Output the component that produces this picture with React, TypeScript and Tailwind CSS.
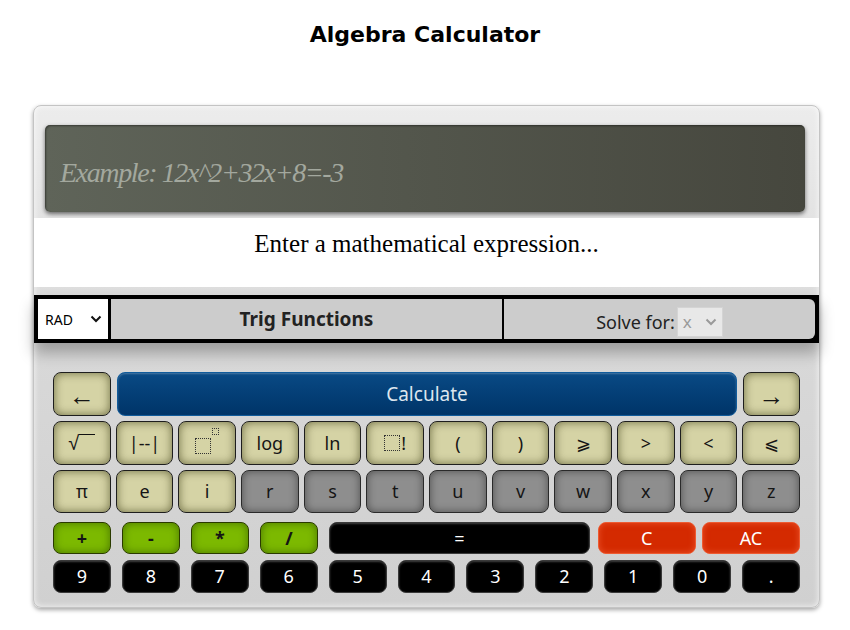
const beige =
  "bg-[#d5d3a5] border-[1.5px] border-[#1e1e1e] text-[#151515] shadow-[inset_0_0_10px_rgba(40,40,0,0.6)]";
const gray =
  "bg-[#8e8e8e] border-[1.5px] border-[#2a2a2a] text-[#151515] shadow-[inset_0_0_9px_rgba(0,0,0,0.45)]";
const green =
  "bg-[#7cb900] border-[1.5px] border-[#2a3a00] text-[#151515] shadow-[inset_0_0_8px_rgba(30,60,0,0.55)]";
const black = "bg-black border-[1.5px] border-[#3a3a3a] text-white shadow-[inset_0_1px_2px_rgba(255,255,255,0.25)]";
const red =
  "bg-[#d42a00] border border-[#ee5a30] text-white shadow-[inset_0_0_6px_rgba(255,120,80,0.5)]";

const fnRow = ["√‾", "|--|", "sq", "log", "ln", "fact", "(", ")", "⩾", ">", "<", "⩽"];
const letterRow = ["π", "e", "i", "r", "s", "t", "u", "v", "w", "x", "y", "z"];
const digits = ["9", "8", "7", "6", "5", "4", "3", "2", "1", "0", "."];

const Key = ({ cls, children, extra = "" }: { cls: string; children: React.ReactNode; extra?: string }) => (
  <div className={`flex items-center justify-center rounded-[8px] text-[18px] ${cls} ${extra}`}>{children}</div>
);

const Chevron = ({ color }: { color: string }) => (
  <svg width="12" height="8" viewBox="0 0 12 8" fill="none">
    <path d="M1.5 1.5 L6 6 L10.5 1.5" stroke={color} strokeWidth="2" />
  </svg>
);

const Boxy = ({ small }: { small?: boolean }) => (
  <span
    className={`inline-block border border-dotted border-[#333] ${small ? "w-[7px] h-[7px]" : "w-[16px] h-[16px]"}`}
  />
);

const fnLabel = (k: string) => {
  if (k === "sq")
    return (
      <span className="flex items-start gap-[1px] pt-[2px]">
        <span className="mt-[6px]"><Boxy /></span>
        <Boxy small />
      </span>
    );
  if (k === "fact")
    return (
      <span className="flex items-center gap-[1px]">
        <Boxy />
        <span>!</span>
      </span>
    );
  if (k === "√‾")
    return (
      <span className="flex items-start">
        <span className="text-[20px] leading-none">√</span>
        <span className="mt-[1px] w-[16px] border-t border-[#111]" />
      </span>
    );
  return k;
};

export default function App() {
  return (
    <div className="w-[850px] h-[630px] bg-white" style={{ fontFamily: "'Noto Sans', sans-serif" }}>
      <h1 className="pt-[20px] text-center text-[22px] font-bold text-black font-['DejaVu_Sans',sans-serif] leading-[30px]">
        Algebra Calculator
      </h1>

      <div className="ml-[33px] mt-[55px] w-[787px] rounded-[8px] border border-[#c4c4c4] bg-linear-to-b from-[#ececec] via-[#d8d8d8] to-[#d0d0d0] pt-[19px] pb-[14px] shadow-[0_2px_4px_rgba(0,0,0,0.35),inset_0_0_6px_rgba(255,255,255,0.8)]">
        {/* display */}
        <div className="ml-[11px] mr-[14px] h-[87px] rounded-[5px] bg-linear-to-r from-[#5f6459] to-[#46473e] shadow-[0_2px_4px_rgba(0,0,0,0.55),inset_1px_1px_2px_rgba(0,0,0,0.4)] flex items-center pl-[15px] pt-[8px]">
          <span className="italic text-[28px] tracking-[-1.4px] text-[#a3a89e] font-['Liberation_Serif',serif]">
            Example: 12x^2+32x+8=-3
          </span>
        </div>

        <div className="mt-[6px] h-[69px] bg-white text-center pt-[7px] text-[25px] text-black font-['Liberation_Serif',serif]">
          Enter a mathematical expression...
        </div>

        {/* control bar */}
        <div className="mt-[8px] h-[48px] border-4 border-black bg-black flex shadow-[0_10px_14px_rgba(0,0,0,0.28)]">
          <div className="w-[70px] bg-white flex items-center justify-between pl-[7px] pr-[6px] text-[14px] text-black">
            RAD
            <Chevron color="#111" />
          </div>
          <div className="ml-[3px] w-[391px] bg-[#cccccc] flex items-center justify-center text-[19px] font-bold text-[#222]">
            Trig Functions
          </div>
          <div className="ml-[2px] flex-1 bg-[#cccccc] rounded-r-[6px] flex items-end justify-center pb-[2px] gap-[2px] text-[18px] text-[#222]">
            <span className="pb-[1px]">Solve for:</span>
            <div className="w-[46px] h-[30px] bg-[#e8e8e8] border border-[#d4d4d4] flex items-center justify-between pl-[5px] pr-[5px] text-[#9a9a9a] text-[17px]">
              x
              <Chevron color="#9a9a9a" />
            </div>
          </div>
        </div>

        {/* keypad */}
        <div className="mt-[29px] pl-[19px] pr-[19px] flex flex-col">
          <div className="flex gap-[6px] h-[44px]">
            <Key cls={beige} extra="w-[58px] text-[#333] !text-[26px] pt-[2px]">←</Key>
            <div className="flex-1 rounded-[8px] bg-linear-to-b from-[#0a4a85] to-[#003468] border border-[#115c9c] flex items-center justify-center text-[19px] text-[#dde6ee] shadow-[inset_0_1px_2px_rgba(255,255,255,0.25)]">
              Calculate
            </div>
            <Key cls={beige} extra="w-[57px] text-[#333] !text-[26px] pt-[2px]">→</Key>
          </div>

          <div className="mt-[5px] grid grid-cols-12 gap-[5px] h-[44px]">
            {fnRow.map((k) => (
              <Key key={k} cls={beige}>{fnLabel(k)}</Key>
            ))}
          </div>

          <div className="mt-[5px] grid grid-cols-12 gap-[5px] h-[43px]">
            {letterRow.map((k, i) => (
              <Key key={k} cls={i < 3 ? beige : gray}>{k}</Key>
            ))}
          </div>

          <div className="mt-[9px] flex h-[32px]">
            <div className="flex gap-[11px]">
              {["+", "-", "*", "/"].map((k) => (
                <Key key={k} cls={green} extra="w-[58px] font-bold">{k}</Key>
              ))}
            </div>
            <Key cls={black} extra="ml-[11px] w-[263px]">=</Key>
            <Key cls={red} extra="ml-[8px] w-[99px]">C</Key>
            <Key cls={red} extra="ml-[6px] w-[99px]">AC</Key>
          </div>

          <div className="mt-[6px] grid grid-cols-11 gap-[11px] h-[33px]">
            {digits.map((k) => (
              <Key key={k} cls={black}>{k}</Key>
            ))}
          </div>
        </div>
      </div>
    </div>
  );
}
